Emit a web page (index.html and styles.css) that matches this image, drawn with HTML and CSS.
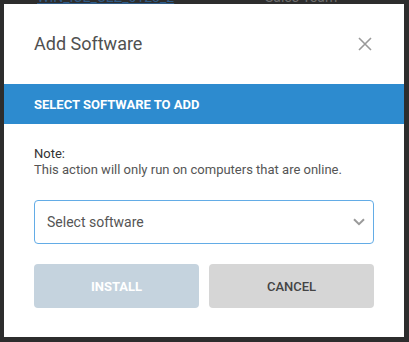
FILE: index.html
```html
<!DOCTYPE html>
<html>
<head>
<meta charset="utf-8">
<link rel="stylesheet" href="styles.css">
</head>
<body>
<div class="backdrop-row">
  <span class="bg-link">WIN_ICE_CEZ_0123_2</span>
  <span class="bg-text">Sales Team</span>
</div>
<div class="modal">
  <div class="modal-header">
    <h1 class="modal-title">Add Software</h1>
    <svg class="close-icon" width="14" height="14" viewBox="0 0 14 14">
      <path d="M1 1L13 13M13 1L1 13" stroke="#9a9a9a" stroke-width="1.6" fill="none"/>
    </svg>
  </div>
  <div class="section-bar">SELECT SOFTWARE TO ADD</div>
  <div class="modal-body">
    <div class="note">
      <div class="note-label">Note:</div>
      <div class="note-text">This action will only run on computers that are online.</div>
    </div>
    <div class="select">
      <span class="select-text">Select software</span>
      <svg class="chevron" width="12" height="8" viewBox="0 0 12 8">
        <path d="M1 1.2L6 6.2L11 1.2" stroke="#9a9a9a" stroke-width="2" fill="none"/>
      </svg>
    </div>
    <div class="actions">
      <button class="btn btn-install">INSTALL</button>
      <button class="btn btn-cancel">CANCEL</button>
    </div>
  </div>
</div>
</body>
</html>
```

FILE: styles.css
```css
html, body {
  margin: 0;
  padding: 0;
}
body {
  width: 409px;
  height: 342px;
  background: #2d2d2d;
  font-family: Roboto, "Liberation Sans", sans-serif;
  position: relative;
  overflow: hidden;
}
.backdrop-row {
  position: absolute;
  top: -11px;
  left: 0;
  width: 409px;
  height: 16px;
  font-size: 14px;
  line-height: 16px;
}
.bg-link {
  position: absolute;
  left: 37px;
  color: #2f5a85;
  text-decoration: underline;
}
.bg-text {
  position: absolute;
  left: 265px;
  color: #6e6e6e;
}
.modal {
  position: absolute;
  top: 4px;
  left: 4px;
  width: 400px;
  height: 333px;
  background: #ffffff;
  box-sizing: border-box;
}
.modal-header {
  height: 80px;
  padding: 0 32px 0 30px;
  display: flex;
  align-items: center;
  justify-content: space-between;
}
.modal-title {
  margin: 0;
  font-size: 18px;
  font-weight: 400;
  color: #505050;
  line-height: 22px;
}
.close-icon {
  display: block;
}
.section-bar {
  height: 40px;
  background: #2d8bcf;
  color: #ffffff;
  font-size: 13px;
  font-weight: 700;
  padding-left: 30px;
  display: flex;
  align-items: center;
}
.modal-body {
  padding: 22px 30px 0 30px;
}
.note {
  font-size: 13px;
  line-height: 16px;
}
.note-label {
  color: #333333;
}
.note-text {
  color: #555555;
}
.select {
  margin-top: 22px;
  height: 44px;
  box-sizing: border-box;
  border: 1px solid #63ace6;
  border-radius: 4px;
  display: flex;
  align-items: center;
  justify-content: space-between;
  padding: 0 8px 0 12px;
}
.select-text {
  font-size: 14px;
  color: #555555;
}
.chevron {
  display: block;
}
.actions {
  margin-top: 20px;
  display: flex;
  gap: 10px;
}
.btn {
  flex: 1;
  height: 44px;
  border: none;
  border-radius: 4px;
  font-family: Roboto, "Liberation Sans", sans-serif;
  font-size: 13px;
  padding: 0;
}
.btn-install {
  background: #c5d3de;
  color: #ffffff;
  font-weight: 700;
}
.btn-cancel {
  background: #d6d6d6;
  color: #444444;
  font-weight: 500;
}
```
